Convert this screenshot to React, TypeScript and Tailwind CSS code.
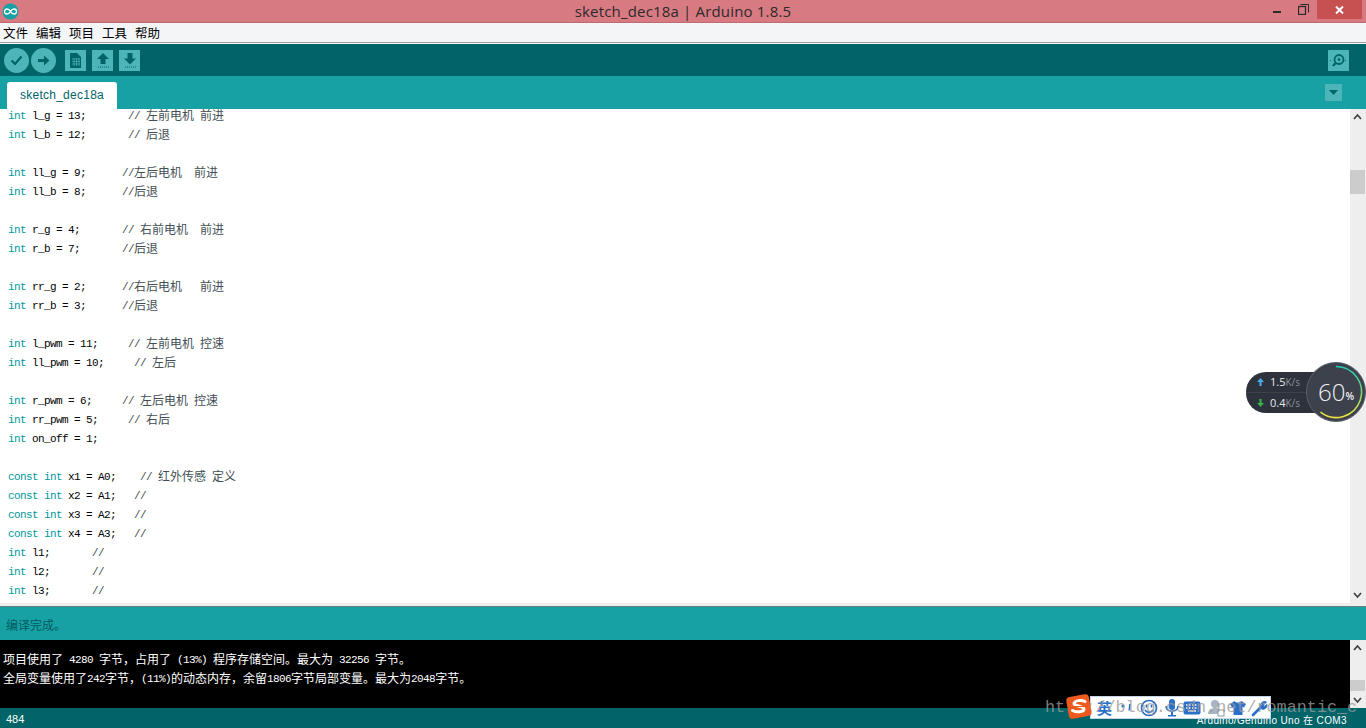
import React from 'react';

const CODE = [
  'int l_g = 13;       // 左前电机 前进',
  'int l_b = 12;       // 后退',
  '',
  'int ll_g = 9;      //左后电机  前进',
  'int ll_b = 8;      //后退',
  '',
  'int r_g = 4;       // 右前电机  前进',
  'int r_b = 7;       //后退',
  '',
  'int rr_g = 2;      //右后电机   前进',
  'int rr_b = 3;      //后退',
  '',
  'int l_pwm = 11;     // 左前电机 控速',
  'int ll_pwm = 10;     // 左后',
  '',
  'int r_pwm = 6;     // 左后电机 控速',
  'int rr_pwm = 5;     // 右后',
  'int on_off = 1;',
  '',
  'const int x1 = A0;    // 红外传感 定义',
  'const int x2 = A1;   //',
  'const int x3 = A2;   //',
  'const int x4 = A3;   //',
  'int l1;       //',
  'int l2;       //',
  'int l3;       //',
];

const MONO = "[font-family:'Liberation_Mono','Noto_Sans_CJK_SC',monospace]";

// latin keeps a 6px advance, chinese is 12px; the cjk span must not push the line box
const Mixed: React.FC<{ text: string }> = ({ text }) => (
  <>
    {text.split(/([\u3000-\u9fff\uff00-\uffef]+)/).map((part, i) =>
      i % 2 === 1 ? (
        <span key={i} className="text-[12px] leading-[1px] tracking-normal align-[-1px] [font-family:'Noto_Sans_CJK_SC',sans-serif]">{part}</span>
      ) : (
        <span key={i} className="text-[11px] tracking-[-0.6px]">{part}</span>
      )
    )}
  </>
);

const CodeLine: React.FC<{ line: string }> = ({ line }) => {
  const at = line.indexOf('//');
  const code = at >= 0 ? line.slice(0, at) : line;
  const comment = at >= 0 ? line.slice(at) : '';
  return (
    <div className="h-[19px] leading-[19px] whitespace-pre text-[11px] tracking-[-0.6px]">
      {code.split(/\b(const|int)\b/).map((part, i) =>
        i % 2 === 1 ? (
          <span key={i} className="text-[#00979c]">{part}</span>
        ) : (
          <span key={i} className="text-black">{part}</span>
        )
      )}
      <span className="text-[#434f54]"><Mixed text={comment} /></span>
    </div>
  );
};

const ToolSquare: React.FC<{ children: React.ReactNode }> = ({ children }) => (
  <div className="w-[21px] h-[21px] bg-[#4db5b9] flex items-center justify-center">{children}</div>
);

const ToolCircle: React.FC<{ children: React.ReactNode }> = ({ children }) => (
  <div className="w-[25px] h-[25px] rounded-full bg-[#4db5b9] flex items-center justify-center">{children}</div>
);

const Dots = () => (
  <path d="M5 17h1M7 17h1M9 17h1M11 17h1M13 17h1M15 17h1" stroke="#006468" strokeWidth="1" fill="none" />
);

const ArduinoLogo = () => (
  <svg width="17" height="17" viewBox="0 0 17 17">
    <circle cx="8.5" cy="8.5" r="8" fill="#17a1a5" />
    <path d="M8.5 8.5C7.5 6.6 6.3 6 5 6a2.5 2.5 0 0 0 0 5c1.3 0 2.5-.6 3.5-2.5C9.5 6.6 10.7 6 12 6a2.5 2.5 0 0 1 0 5c-1.3 0-2.5-.6-3.5-2.5Z" fill="none" stroke="#fff" strokeWidth="1.3" />
  </svg>
);

const NetWidget = () => (
  <div className="absolute left-[1246px] top-[362px] w-[120px] h-[61px] [font-family:'Open_Sans',sans-serif]">
    <div className="absolute left-0 top-[10px] w-[80px] h-[41px] rounded-l-[20px] bg-[#2d323c] flex flex-col">
      <div className="h-[21px] flex items-center pl-[11px] border-b border-[#3c414b]">
        <svg width="7" height="8" viewBox="0 0 7 8"><path d="M3.5 0 7 4H4.6v4H2.4V4H0Z" fill="#46a9e8" /></svg>
        <span className="ml-[6px] text-[11px] text-[#e8eaec]">1.5</span>
        <span className="text-[10px] text-[#8b909a]">K/s</span>
      </div>
      <div className="h-[20px] flex items-center pl-[11px]">
        <svg width="7" height="8" viewBox="0 0 7 8"><path d="M3.5 8 7 4H4.6V0H2.4v4H0Z" fill="#35b24a" /></svg>
        <span className="ml-[6px] text-[11px] text-[#e8eaec]">0.4</span>
        <span className="text-[10px] text-[#8b909a]">K/s</span>
      </div>
    </div>
    <div className="absolute left-[60px] top-[0px] w-[60px] h-[60px] rounded-full bg-[#3c414c] border border-[#5a5f69] flex items-center justify-center">
      <span className="text-[24px] font-light text-[#eef0f2] leading-none">60</span>
      <span className="text-[10px] font-semibold text-[#eef0f2] mt-[8px]">%</span>
    </div>
    <svg className="absolute left-[60px] top-0" width="60" height="60" viewBox="0 0 60 60">
      <defs>
        <linearGradient id="arc" x1="0" y1="0" x2="0" y2="1">
          <stop offset="0" stopColor="#25cdb8" />
          <stop offset="0.6" stopColor="#8fd86a" />
          <stop offset="1" stopColor="#f2e23c" />
        </linearGradient>
      </defs>
      <path d="M30 4.5A25.5 25.5 0 1 1 14.5 50.2" fill="none" stroke="url(#arc)" strokeWidth="1.6" />
    </svg>
  </div>
);

const ImeBar = () => (
  <div className="absolute left-[1065px] top-[693px] h-[28px] flex items-start">
    <svg className="relative z-10" width="28" height="28" viewBox="0 0 28 28">
      <rect x="2.5" y="2.5" width="23" height="22" rx="4" fill="#ee5a1e" transform="rotate(-10 14 14)" />
      <path d="M20 8.5c-3-1.5-10-1.500-11 2 -.6 2.500 10 2.500 10 5.500 0 3.500-8 3.500-11.500 1.500" fill="none" stroke="#fff" strokeWidth="3" strokeLinecap="round" />
      <path d="M5 13.500h17" stroke="#ee5a1e" strokeWidth="1" />
    </svg>
    <div className="mt-[3px] -ml-[3px] w-[181px] h-[23px] bg-white border border-[#c5d6ea] flex items-center pl-[6px]">
      <span className="text-[15px] font-bold text-[#2a6fc9] leading-none [font-family:'Noto_Sans_CJK_SC',sans-serif]">英</span>
      <svg className="ml-[6px]" width="16" height="16" viewBox="0 0 16 16" fill="#2a6fc9">
        <circle cx="5" cy="6" r="1.600" />
        <path d="M11 4h1.500l-.5 6-1.500 1Z" />
      </svg>
      <svg className="ml-[6px]" width="18" height="18" viewBox="0 0 18 18" fill="none" stroke="#2a6fc9" strokeWidth="1.700">
        <circle cx="9" cy="9" r="7.500" />
        <path d="M6.500 5.500v3M11.500 5.500v3M5 11c2 3 6 3 8 0" />
      </svg>
      <svg className="ml-[6px]" width="16" height="19" viewBox="0 0 16 19" fill="#2a6fc9">
        <rect x="5" y="1" width="6" height="11" rx="3" />
        <path d="M2 8c0 7 12 7 12 0" fill="none" stroke="#2a6fc9" strokeWidth="1.600" />
        <path d="M7 14h2v3h3v1.500H4V17h3Z" />
      </svg>
      <svg className="ml-[3px]" width="18" height="14" viewBox="0 0 18 14">
        <rect x="0.500" y="0.500" width="17" height="13" rx="2" fill="#2a6fc9" />
        <path d="M3 4h1.500M6 4h1.500M9 4h1.500M12 4h1.500M3 7h1.500M6 7h1.500M9 7h1.500M12 7h1.500M5 10h8" stroke="#fff" strokeWidth="1.300" />
      </svg>
      <svg className="ml-[6px]" width="18" height="18" viewBox="0 0 18 18" fill="#a9b4c2">
        <circle cx="8" cy="5" r="4" />
        <path d="M1 15c0-4 3-6 7-6s6 2 6 6Z" />
        <rect x="11" y="11" width="6" height="6" fill="#fff" stroke="#8d98a6" />
      </svg>
      <svg className="ml-[4px]" width="18" height="16" viewBox="0 0 18 16" fill="#2a6fc9">
        <path d="M5.500 1 1 4l2 3.500L4.500 6.500V15h9V6.500L15 7.500 17 4l-4.500-3c-1 2-6 2-7 0Z" />
      </svg>
      <svg className="ml-[4px]" width="18" height="18" viewBox="0 0 18 18" fill="none" stroke="#2a6fc9" strokeWidth="2.600">
        <path d="M2 16 9.500 8.500" strokeLinecap="round" />
        <path d="M9 7.500C9 4.500 12 1.500 15.500 3L12.500 6l1 1.500L16 5.500C16.500 9 13 11 10.500 10Z" fill="#2a6fc9" strokeWidth="1" />
      </svg>
    </div>
  </div>
);

const App: React.FC = () => {
  const menus = ['文件', '编辑', '项目', '工具', '帮助'];

  return (
    <div className="relative w-[1366px] h-[728px] overflow-hidden flex flex-col bg-white [font-family:'Noto_Sans_CJK_SC',sans-serif]">
      {/* title bar */}
      <div className="h-[23px] shrink-0 bg-[#d87a82] border-b border-[#bf6a72] flex items-start">
        <div className="w-[104px] pl-[2px] pt-[3px]"><ArduinoLogo /></div>
        <div className="flex-1 text-center text-[15px] leading-[23px] tracking-[0.17px] text-[#2b2b2b] [font-family:'Open_Sans',sans-serif]">sketch_dec18a | Arduino 1.8.5</div>
        <div className="w-[104px] flex items-start">
          <div className="w-[30px] h-[19px] flex items-center justify-center pt-[4px]"><div className="w-[8px] h-[2px] bg-[#2b2b2b]" /></div>
          <div className="w-[30px] h-[19px] flex items-center justify-center -ml-[4px] -mr-[1px]">
            <svg width="11" height="11" viewBox="0 0 11 11" fill="none" stroke="#2b2b2b" strokeWidth="1">
              <rect x="0.500" y="2.500" width="7" height="8" strokeWidth="1.300" />
              <path d="M2.500 .5h8v8" />
            </svg>
          </div>
          <div className="w-[45px] h-[19px] bg-[#c75050] flex items-center justify-center">
            <svg width="9" height="8" viewBox="0 0 9 8" stroke="#fff" strokeWidth="2"><path d="M1 .5l7 7M8 .5l-7 7" /></svg>
          </div>
        </div>
      </div>

      {/* menu bar */}
      <div className="h-[19px] shrink-0 bg-[#f4f5f7] flex items-center pl-[3px] text-[12.500px] text-black">
        {menus.map(m => (
          <span key={m} className="w-[33px] leading-[19px]">{m}</span>
        ))}
      </div>
      <div className="h-[1px] shrink-0 bg-[#a0a0a0]" />
      <div className="h-[1px] shrink-0 bg-white" />

      {/* toolbar */}
      <div className="h-[32px] shrink-0 bg-[#006468] flex items-center pl-[4px] pr-[17px]">
        <div className="flex gap-[2px]">
          <ToolCircle>
            <svg width="13" height="11" viewBox="0 0 13 11" fill="none" stroke="#006468" strokeWidth="2.200"><path d="M1.500 5.500 5 9l6.500-7.500" /></svg>
          </ToolCircle>
          <ToolCircle>
            <svg width="12" height="11" viewBox="0 0 12 11" fill="#006468"><path d="M0 4h6V0.500L11.500 5.500 6 10.500V7H0Z" /></svg>
          </ToolCircle>
        </div>
        <div className="flex gap-[6px] ml-[9px]">
          <ToolSquare>
            <svg width="13" height="15" viewBox="0 0 13 15"><path d="M1 0h7l4 4v11H1Z" fill="#006468" /><path d="M3 6h8M3 8.500h8M3 11h8M5 5v8M7.500 5v8M10 5v8" stroke="#4db5b9" strokeWidth="0.700" /></svg>
          </ToolSquare>
          <ToolSquare>
            <svg width="20" height="20" viewBox="0 0 20 20" fill="#006468"><path d="M10 3l6 6h-3.500v5h-5V9H4Z" /><Dots /></svg>
          </ToolSquare>
          <ToolSquare>
            <svg width="20" height="20" viewBox="0 0 20 20" fill="#006468"><path d="M10 14.500l-6-6h3.500V3h5v5.500H16Z" /><Dots /></svg>
          </ToolSquare>
        </div>
        <div className="ml-auto">
          <ToolSquare>
            <svg width="19" height="19" viewBox="0 0 19 19" fill="none" stroke="#006468">
              <circle cx="10" cy="8.500" r="4.500" strokeWidth="1.800" />
              <circle cx="10" cy="8.500" r="1" fill="#006468" />
              <path d="M6.500 12 4 15" strokeWidth="2.200" />
              <path d="M1 9.500h2M16 9.500h2" strokeDasharray="1 1" />
            </svg>
          </ToolSquare>
        </div>
      </div>

      {/* tabs */}
      <div className="h-[33px] shrink-0 bg-[#17a1a5] flex items-end pl-[7px] pr-[24px] justify-between">
        <div className="w-[110px] h-[27px] bg-white rounded-t-[3px] text-center text-[12px] leading-[26px] tracking-[0.25px] text-[#006468] [font-family:'Liberation_Sans',sans-serif]">sketch_dec18a</div>
        <div className="w-[17px] h-[17px] bg-[#4db5b9] mb-[8px] flex items-center justify-center">
          <svg width="9" height="5" viewBox="0 0 9 5"><path d="M0 0h9L4.500 5Z" fill="#006468" /></svg>
        </div>
      </div>

      {/* editor */}
      <div className="h-[497px] shrink-0 flex overflow-hidden">
        <div className="flex-1 overflow-hidden flex flex-col">
          <div className={`flex-1 overflow-hidden pl-[8px] -mt-[2px] ${MONO}`}>
            {CODE.map((line, i) => (
              <CodeLine key={i} line={line} />
            ))}
          </div>
          <div className="h-[3px] shrink-0 bg-[#eeeeee]" />
        </div>
        <div className="w-[16px] shrink-0 bg-[#eeeeee] relative">
          <svg className="absolute left-[3px] top-[4px]" width="9" height="7" viewBox="0 0 9 7" fill="none" stroke="#444" strokeWidth="1.800"><path d="M1 6l3.500-4L8 6" /></svg>
          <div className="absolute left-0 top-[61px] w-[15px] h-[24px] bg-[#cccccc]" />
          <svg className="absolute left-[3px] bottom-[7px]" width="9" height="7" viewBox="0 0 9 7" fill="none" stroke="#444" strokeWidth="1.800"><path d="M1 1l3.500 4L8 1" /></svg>
        </div>
      </div>
      <div className="h-[1px] shrink-0 bg-[#6f7f80]" />

      {/* status */}
      <div className="h-[33px] shrink-0 bg-[#17a1a5] pl-[6px] text-[12px] leading-[36px] text-[#005c5f]">编译完成。</div>

      {/* console */}
      <div className="h-[68px] shrink-0 bg-black flex">
        <div className="flex-1 pl-[3px] pt-[11px] text-white whitespace-pre text-[11px] tracking-[-0.6px] [font-family:'Liberation_Mono','Noto_Sans_CJK_SC',monospace]">
          <div className="h-[19px] leading-[19px]"><Mixed text="项目使用了 4280 字节，占用了 (13%) 程序存储空间。最大为 32256 字节。" /></div>
          <div className="h-[19px] leading-[19px]"><Mixed text="全局变量使用了242字节，(11%)的动态内存，余留1806字节局部变量。最大为2048字节。" /></div>
        </div>
        <div className="w-[16px] shrink-0 bg-[#eeeeee] relative">
          <svg className="absolute left-[3px] top-[4px]" width="9" height="7" viewBox="0 0 9 7" fill="none" stroke="#444" strokeWidth="1.800"><path d="M1 6l3.500-4L8 6" /></svg>
          <div className="absolute left-0 top-[40px] w-[15px] h-[11px] bg-[#cccccc]" />
          <svg className="absolute left-[3px] bottom-[4px]" width="9" height="7" viewBox="0 0 9 7" fill="none" stroke="#444" strokeWidth="1.800"><path d="M1 1l3.500 4L8 1" /></svg>
        </div>
      </div>

      {/* footer */}
      <div className="flex-1 bg-[#006468] flex items-center justify-between pl-[6px] pr-[19px] text-white text-[11px] [font-family:'Liberation_Sans','Noto_Sans_CJK_SC',sans-serif]">
        <span className="pt-[3px]">484</span>
        <span className="pt-[5px] text-[10px] tracking-[0.37px]">Arduino/Genuino Uno 在 COM3</span>
      </div>

      {/* overlays: desktop widgets and the blog watermark */}
      <NetWidget />
      <ImeBar />
      <div className="absolute left-[1045px] top-[698px] text-[16.800px] leading-[20px] text-[#9a9a9a]/80 whitespace-pre [font-family:'Liberation_Mono',monospace]">http://blog.csdn.net/romantic_c</div>
    </div>
  );
};

export default App;
